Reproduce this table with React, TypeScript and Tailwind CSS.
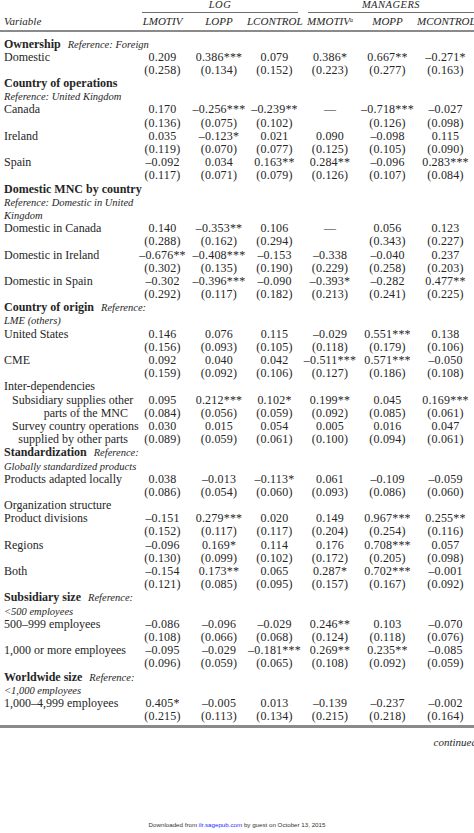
import React from "react";

const GRID = "grid grid-cols-[134px_57px_56px_55px_56px_59px_57px]";

type V = string[];

function DataRow({ label, vals, labelCls = "" }: { label: React.ReactNode; vals?: V; labelCls?: string }) {
  return (
    <div className={`${GRID} h-[13.2px] leading-[13.2px]`}>
      <div className={`whitespace-nowrap pl-[4px] ${labelCls}`}>{label}</div>
      {(vals ?? ["", "", "", "", "", ""]).map((v, i) => (
        <div key={i} className="whitespace-nowrap text-center tracking-[0.2px]">
          {v}
        </div>
      ))}
    </div>
  );
}

function Pair({ label, a, b, label2, l2Cls = "" }: { label: React.ReactNode; a: V; b: V; label2?: React.ReactNode; l2Cls?: string }) {
  return (
    <>
      <DataRow label={label} vals={a} />
      <DataRow label={label2 ?? ""} vals={b} labelCls={l2Cls} />
    </>
  );
}

function Ref({ children }: { children: React.ReactNode }) {
  return <span className="italic text-[10.5px] ml-[7px]">{children}</span>;
}

export default function App() {
  return (
    <div
      className="w-[474px] h-[833px] overflow-hidden bg-white text-[#262626] text-[12px]"
      style={{ fontFamily: '"Liberation Serif", "Times New Roman", serif' }}
    >
      {/* top group headings */}
      <div className={`${GRID} h-[10px] leading-[9px] italic text-[10.5px] tracking-[0.5px]`}>
        <div />
        <div className="col-span-3 text-center pl-[4px]">LOG</div>
        <div className="col-span-3 text-center pl-[6px]">MANAGERS</div>
      </div>
      <div className={`${GRID} mt-[2px] h-[2px]`}>
        <div />
        <div className="col-span-3 ml-[8px] mr-[4px] border-t-[1.5px] border-[#6f6f6f]" />
        <div className="col-span-3 ml-[6px] border-t-[1.5px] border-[#6f6f6f]" />
      </div>
      <div className={`${GRID} mt-[0.5px] h-[13px] leading-[13px] italic text-[11px]`}>
        <div className="pl-[4px]">Variable</div>
        <div className="text-center">LMOTIV</div>
        <div className="text-center">LOPP</div>
        <div className="text-center whitespace-nowrap">LCONTROL</div>
        <div className="text-center whitespace-nowrap">
          MMOTIV<sup className="text-[6px]">a</sup>
        </div>
        <div className="text-center">MOPP</div>
        <div className="text-center whitespace-nowrap">MCONTROL</div>
      </div>
      <div className="mt-[2px] h-[2px] bg-[#8a8a8a]" />

      <div className="mt-[6px]">
        <DataRow label={<><span className="font-bold">Ownership</span><Ref>Reference: Foreign</Ref></>} />
        <Pair
          label="Domestic"
          a={["0.209", "0.386***", "0.079", "0.386*", "0.667**", "–0.271*"]}
          b={["(0.258)", "(0.134)", "(0.152)", "(0.223)", "(0.277)", "(0.163)"]}
        />
        <DataRow label={<span className="font-bold">Country of operations</span>} />
        <DataRow label={<span className="italic text-[10.5px]">Reference: United Kingdom</span>} />
        <Pair
          label="Canada"
          a={["0.170", "–0.256***", "–0.239**", "—", "–0.718***", "–0.027"]}
          b={["(0.136)", "(0.075)", "(0.102)", "", "(0.126)", "(0.098)"]}
        />
        <Pair
          label="Ireland"
          a={["0.035", "–0.123*", "0.021", "0.090", "–0.098", "0.115"]}
          b={["(0.119)", "(0.070)", "(0.077)", "(0.125)", "(0.105)", "(0.090)"]}
        />
        <Pair
          label="Spain"
          a={["–0.092", "0.034", "0.163**", "0.284**", "–0.096", "0.283***"]}
          b={["(0.117)", "(0.071)", "(0.079)", "(0.126)", "(0.107)", "(0.084)"]}
        />
        <DataRow label={<span className="font-bold">Domestic MNC by country</span>} />
        <DataRow label={<span className="italic text-[10.5px]">Reference: Domestic in United</span>} />
        <DataRow label={<span className="italic text-[10.5px]">Kingdom</span>} />
        <Pair
          label="Domestic in Canada"
          a={["0.140", "–0.353**", "0.106", "—", "0.056", "0.123"]}
          b={["(0.288)", "(0.162)", "(0.294)", "", "(0.343)", "(0.227)"]}
        />
        <Pair
          label="Domestic in Ireland"
          a={["–0.676**", "–0.408***", "–0.153", "–0.338", "–0.040", "0.237"]}
          b={["(0.302)", "(0.135)", "(0.190)", "(0.229)", "(0.258)", "(0.203)"]}
        />
        <Pair
          label="Domestic in Spain"
          a={["–0.302", "–0.396***", "–0.090", "–0.393*", "–0.282", "0.477**"]}
          b={["(0.292)", "(0.117)", "(0.182)", "(0.213)", "(0.241)", "(0.225)"]}
        />
        <DataRow label={<><span className="font-bold">Country of origin</span><Ref>Reference:</Ref></>} />
        <DataRow label={<span className="italic text-[10.5px]">LME (others)</span>} />
        <Pair
          label="United States"
          a={["0.146", "0.076", "0.115", "–0.029", "0.551***", "0.138"]}
          b={["(0.156)", "(0.093)", "(0.105)", "(0.118)", "(0.179)", "(0.106)"]}
        />
        <Pair
          label="CME"
          a={["0.092", "0.040", "0.042", "–0.511***", "0.571***", "–0.050"]}
          b={["(0.159)", "(0.092)", "(0.106)", "(0.127)", "(0.186)", "(0.108)"]}
        />
        <DataRow label="Inter-dependencies" />
        <Pair
          label={<span className="pl-[8px]">Subsidiary supplies other</span>}
          a={["0.095", "0.212***", "0.102*", "0.199**", "0.045", "0.169***"]}
          b={["(0.084)", "(0.056)", "(0.059)", "(0.092)", "(0.085)", "(0.061)"]}
          label2="parts of the MNC"
          l2Cls="text-right pr-[6px]"
        />
        <Pair
          label={<span className="pl-[8px]">Survey country operations</span>}
          a={["0.030", "0.015", "0.054", "0.005", "0.016", "0.047"]}
          b={["(0.089)", "(0.059)", "(0.061)", "(0.100)", "(0.094)", "(0.061)"]}
          label2="supplied by other parts"
          l2Cls="text-right pr-[6px]"
        />
        <DataRow label={<><span className="font-bold">Standardization</span><Ref>Reference:</Ref></>} />
        <DataRow label={<span className="italic text-[10.5px]">Globally standardized products</span>} />
        <Pair
          label="Products adapted locally"
          a={["0.038", "–0.013", "–0.113*", "0.061", "–0.109", "–0.059"]}
          b={["(0.086)", "(0.054)", "(0.060)", "(0.093)", "(0.086)", "(0.060)"]}
        />
        <DataRow label="Organization structure" />
        <Pair
          label="Product divisions"
          a={["–0.151", "0.279***", "0.020", "0.149", "0.967***", "0.255**"]}
          b={["(0.152)", "(0.117)", "(0.117)", "(0.204)", "(0.254)", "(0.116)"]}
        />
        <Pair
          label="Regions"
          a={["–0.096", "0.169*", "0.114", "0.176", "0.708***", "0.057"]}
          b={["(0.130)", "(0.099)", "(0.102)", "(0.172)", "(0.205)", "(0.098)"]}
        />
        <Pair
          label="Both"
          a={["–0.154", "0.173**", "0.065", "0.287*", "0.702***", "–0.001"]}
          b={["(0.121)", "(0.085)", "(0.095)", "(0.157)", "(0.167)", "(0.092)"]}
        />
        <DataRow label={<><span className="font-bold">Subsidiary size</span><Ref>Reference:</Ref></>} />
        <DataRow label={<span className="italic text-[10.5px]">&lt;500 employees</span>} />
        <Pair
          label="500–999 employees"
          a={["–0.086", "–0.096", "–0.029", "0.246**", "0.103", "–0.070"]}
          b={["(0.108)", "(0.066)", "(0.068)", "(0.124)", "(0.118)", "(0.076)"]}
        />
        <Pair
          label="1,000 or more employees"
          a={["–0.095", "–0.029", "–0.181***", "0.269**", "0.235**", "–0.085"]}
          b={["(0.096)", "(0.059)", "(0.065)", "(0.108)", "(0.092)", "(0.059)"]}
        />
        <DataRow label={<><span className="font-bold">Worldwide size</span><Ref>Reference:</Ref></>} />
        <DataRow label={<span className="italic text-[10.5px]">&lt;1,000 employees</span>} />
        <Pair
          label="1,000–4,999 employees"
          a={["0.405*", "–0.005", "0.013", "–0.139", "–0.237", "–0.002"]}
          b={["(0.215)", "(0.113)", "(0.134)", "(0.215)", "(0.218)", "(0.164)"]}
        />
      </div>

      <div className="mt-[2px] h-[2.5px] bg-[#8a8a8a]" />

      <div className="mt-[8px] flex justify-end h-[13px] leading-[13px]">
        <span className="italic text-[11px] mr-[-3px]">continued</span>
      </div>

      <div
        className="mt-[72px] h-[8px] leading-[8px] text-center text-[6.2px] text-[#333]"
        style={{ fontFamily: '"Liberation Sans", Arial, sans-serif' }}
      >
        Downloaded from <span className="text-[#2a2aff]">ilr.sagepub.com</span> by guest on October 13, 2015
      </div>
    </div>
  );
}
